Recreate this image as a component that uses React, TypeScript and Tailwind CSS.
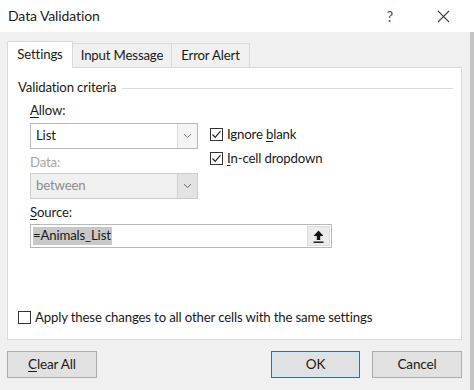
import React from "react";

const font = { fontFamily: 'Lato, "Noto Sans", sans-serif' };

function Chevron({ color = "#7a7a7a" }: { color?: string }) {
  return (
    <svg width="9" height="6" viewBox="0 0 9 6">
      <path d="M1 1.2 L4.5 4.5 L8 1.2" fill="none" stroke={color} strokeWidth="1" />
    </svg>
  );
}

function Check({ checked }: { checked: boolean }) {
  return (
    <div className="w-[13px] h-[13px] border border-[#333] bg-white flex items-center justify-center shrink-0">
      {checked && (
        <svg width="11" height="11" viewBox="0 0 11 11">
          <path d="M1.5 5.5 L4.2 8.3 L9.5 2.2" fill="none" stroke="#222" strokeWidth="1.2" />
        </svg>
      )}
    </div>
  );
}

export default function App() {
  return (
    <div
      className="w-[474px] h-[390px] bg-[#f0f0f0] flex flex-col overflow-hidden text-[#1a1a1a] text-[13.2px] tracking-[-0.15px] leading-none"
      style={font}
    >
      {/* Title bar */}
      <div className="h-[32px] bg-white flex items-center shrink-0">
        <span className="pl-[8px] text-[14px] tracking-[-0.1px] text-[#1b1b1b]">Data Validation</span>
        <span className="ml-auto mr-[44px] text-[15px] text-[#555]">?</span>
        <svg width="13" height="13" viewBox="0 0 13 13" className="mr-[24px]">
          <path d="M1 1 L12 12 M12 1 L1 12" stroke="#444" strokeWidth="1.1" />
        </svg>
      </div>

      <div className="flex-1 flex">
        <div className="flex-1 flex flex-col pl-[7px] pr-[8px]">
          {/* Tabs */}
          <div className="flex items-end h-[35px] pt-[9px]">
            <div className="h-[27px] w-[66px] bg-white border border-b-0 border-[#d9d9d9] flex items-center justify-center relative z-10 -mb-px">
              Settings
            </div>
            <div className="h-[24px] w-[99px] bg-[#f0f0f0] border border-l-0 border-b-0 border-[#d9d9d9] flex items-center justify-center">
              Input Message
            </div>
            <div className="h-[24px] w-[78px] bg-[#f0f0f0] border border-l-0 border-b-0 border-[#d9d9d9] flex items-center justify-center">
              Error Alert
            </div>
          </div>

          {/* Panel */}
          <div className="h-[273px] bg-white border border-[#d9d9d9] flex flex-col pl-[10px] pr-[8px]">
            <div className="flex items-center mt-[13px] h-[14px]">
              <span>Validation criteria</span>
              <div className="flex-1 h-px bg-[#dcdcdc] ml-[6px]" />
            </div>

            <div className="flex pl-[12px] mt-[9px]">
              <div className="flex flex-col w-[168px]">
                <div className="h-[14px]">
                  <span className="underline underline-offset-2">A</span>llow:
                </div>
                <div className="mt-[5px] h-[26px] border border-[#b8b8b8] bg-white flex items-center">
                  <span className="pl-[5px] flex-1">List</span>
                  <div className="w-[20px] h-full flex items-center justify-center border-l border-[#dadada] bg-[#f4f4f4]">
                    <Chevron />
                  </div>
                </div>
                <div className="mt-[7px] h-[14px] text-[#a6a6a6]">Data:</div>
                <div className="mt-[3px] h-[26px] border border-[#cccccc] bg-[#f0f0f0] flex items-center">
                  <span className="pl-[5px] flex-1 text-[#8c8c8c]">between</span>
                  <div className="w-[20px] h-full flex items-center justify-center border-l border-[#d0d0d0] bg-[#e3e3e3]">
                    <Chevron color="#6a6a6a" />
                  </div>
                </div>
              </div>
              <div className="flex flex-col ml-[12px] mt-[24px] gap-[11px]">
                <div className="flex items-center gap-[4px] h-[13px]">
                  <Check checked />
                  <span>
                    Ignore <span className="underline underline-offset-2">b</span>lank
                  </span>
                </div>
                <div className="flex items-center gap-[4px] h-[13px]">
                  <Check checked />
                  <span>
                    <span className="underline underline-offset-2">I</span>n-cell dropdown
                  </span>
                </div>
              </div>
            </div>

            <div className="pl-[12px] mt-[7px] h-[14px]">
              <span className="underline underline-offset-2">S</span>ource:
            </div>
            <div className="ml-[12px] mt-[4px] w-[302px] h-[24px] border border-[#b8b8b8] bg-white flex items-center">
              <span className="ml-[2px] bg-[#c8c8c8] h-[18px] flex items-center pr-[1px]">=Animals_List</span>
              <div className="ml-auto mr-[1px] w-[23px] h-[20px] bg-[#ececec] border border-[#dcdcdc] flex items-center justify-center">
                <svg width="11" height="13" viewBox="0 0 11 13">
                  <path d="M5.5 0.5 L10.5 6 L7.2 6 L7.2 10 L3.8 10 L3.8 6 L0.5 6 Z" fill="#111" />
                  <rect x="0.5" y="11.5" width="10" height="1.4" fill="#111" />
                </svg>
              </div>
            </div>

            <div className="flex items-center gap-[4px] mt-[63px] h-[13px]">
              <Check checked={false} />
              <span>Apply these changes to all other cells with the same settings</span>
            </div>
          </div>

          {/* Buttons */}
          <div className="flex mt-[11px]">
            <button className="w-[90px] h-[27px] bg-[#e1e1e1] border border-[#adadad] text-[13.5px]" style={font}>
              <span className="underline underline-offset-2">C</span>lear All
            </button>
            <button
              className="ml-auto w-[89px] h-[27px] bg-[#e1e1e1] border border-[#2f6fa8] ring-1 ring-inset ring-[#cde8f7] text-[13.5px]"
              style={font}
            >
              OK
            </button>
            <button className="ml-[12px] w-[90px] h-[27px] bg-[#e1e1e1] border border-[#adadad] text-[13.5px]" style={font}>
              Cancel
            </button>
          </div>
        </div>
        <div className="w-[4px] bg-[#c4c4c4]" />
      </div>
    </div>
  );
}
